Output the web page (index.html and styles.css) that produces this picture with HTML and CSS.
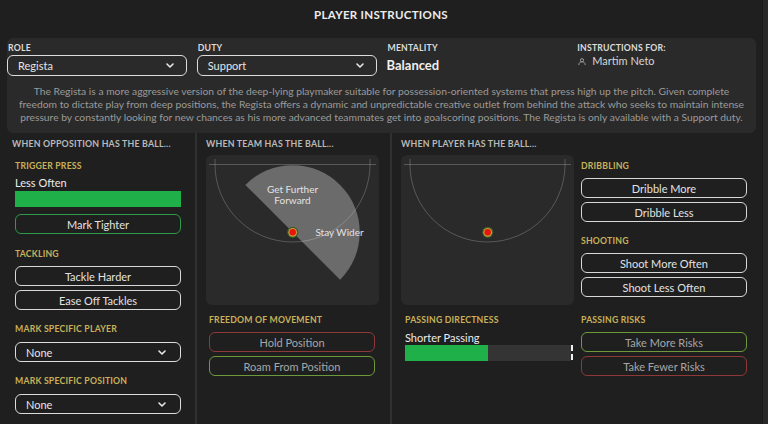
FILE: index.html
```html
<!DOCTYPE html>
<html lang="en">
<head>
    <meta charset="UTF-8">
    <meta name="viewport" content="width=device-width, initial-scale=1.0">
    <title>Player Instructions</title>

    <!-- CSS Styles -->
    <link rel="stylesheet" href="styles.css">
</head>
<body>

    <div class="page">
        <div class="main">
            <!-- Title -->
            <h1 class="title">PLAYER INSTRUCTIONS</h1>

            <!-- Role summary -->
            <section class="role-panel">
                <div class="role-fields">
                    <div class="field">
                        <div class="field-label">ROLE</div>
                        <div class="select">
                            <span>Regista</span>
                            <svg class="chevron" width="8" height="5" viewBox="0 0 8 5"><path d="M1 1 L4 4 L7 1" fill="none" stroke="#e6e6e6" stroke-width="1.6" stroke-linecap="round" stroke-linejoin="round"/></svg>
                        </div>
                    </div>
                    <div class="field">
                        <div class="field-label">DUTY</div>
                        <div class="select">
                            <span>Support</span>
                            <svg class="chevron" width="8" height="5" viewBox="0 0 8 5"><path d="M1 1 L4 4 L7 1" fill="none" stroke="#e6e6e6" stroke-width="1.6" stroke-linecap="round" stroke-linejoin="round"/></svg>
                        </div>
                    </div>
                    <div class="field">
                        <div class="field-label">MENTALITY</div>
                        <div class="mentality-value">Balanced</div>
                    </div>
                    <div class="field">
                        <div class="field-label">INSTRUCTIONS FOR:</div>
                        <div class="player-name">
                            <svg width="8" height="7" viewBox="0 0 8 7"><circle cx="4" cy="2.2" r="1.6" fill="none" stroke="#9a9a9a" stroke-width="1"/><path d="M0.8 7 C0.8 4.6 2.2 3.8 4 3.8 C5.8 3.8 7.2 4.6 7.2 7" fill="none" stroke="#9a9a9a" stroke-width="1"/></svg>
                            <span>Martim Neto</span>
                        </div>
                    </div>
                </div>
                <p class="description">
                    The Regista is a more aggressive version of the deep-lying playmaker suitable for possession-oriented systems that press high up the pitch. Given complete<br>
                    freedom to dictate play from deep positions, the Regista offers a dynamic and unpredictable creative outlet from behind the attack who seeks to maintain intense<br>
                    pressure by constantly looking for new chances as his more advanced teammates get into goalscoring positions. The Regista is only available with a Support duty.
                </p>
            </section>

            <div class="columns">
                <!-- Out of possession -->
                <div class="col col-opposition">
                    <h2 class="col-title">WHEN OPPOSITION HAS THE BALL...</h2>

                    <div class="group group-first">
                        <h3 class="group-title">TRIGGER PRESS</h3>
                        <div class="value-label">Less Often</div>
                        <div class="slider"><div class="slider-fill" style="width: 100%"></div></div>
                        <div class="option-list option-list-tight">
                            <button class="option option-on">Mark Tighter</button>
                        </div>
                    </div>

                    <div class="group">
                        <h3 class="group-title">TACKLING</h3>
                        <div class="option-list">
                            <button class="option">Tackle Harder</button>
                            <button class="option">Ease Off Tackles</button>
                        </div>
                    </div>

                    <div class="group group-select">
                        <h3 class="group-title">MARK SPECIFIC PLAYER</h3>
                        <div class="select select-small">
                            <span>None</span>
                            <svg class="chevron" width="8" height="5" viewBox="0 0 8 5"><path d="M1 1 L4 4 L7 1" fill="none" stroke="#e6e6e6" stroke-width="1.6" stroke-linecap="round" stroke-linejoin="round"/></svg>
                        </div>
                    </div>

                    <div class="group group-select">
                        <h3 class="group-title">MARK SPECIFIC POSITION</h3>
                        <div class="select select-small">
                            <span>None</span>
                            <svg class="chevron" width="8" height="5" viewBox="0 0 8 5"><path d="M1 1 L4 4 L7 1" fill="none" stroke="#e6e6e6" stroke-width="1.6" stroke-linecap="round" stroke-linejoin="round"/></svg>
                        </div>
                    </div>
                </div>

                <!-- Team in possession -->
                <div class="col col-team">
                    <h2 class="col-title">WHEN TEAM HAS THE BALL...</h2>
                    <div class="pitch">
                        <svg width="173" height="150" viewBox="0 0 173 150">
                            <path d="M39.3 29.9 A67 67 0 0 1 134.1 124.7 Z" fill="#6b6b6b"/>
                            <line x1="3" y1="9.5" x2="170" y2="9.5" stroke="rgba(255,255,255,0.22)" stroke-width="1"/>
                            <path d="M9 4 V9.5 A77.5 77.5 0 0 0 164 9.5 V4" fill="none" stroke="rgba(255,255,255,0.22)" stroke-width="1"/>
                            <circle cx="86.7" cy="77.3" r="5.6" fill="#3a5c2b"/>
                            <circle cx="86.7" cy="77.3" r="4.4" fill="#c99a38"/>
                            <circle cx="86.7" cy="77.3" r="3.2" fill="#e8150f"/>
                            <text class="pitch-text" x="86.5" y="37.5">Get Further</text>
                            <text class="pitch-text" x="86.5" y="49">Forward</text>
                            <text class="pitch-text" x="133.5" y="80.5">Stay Wider</text>
                        </svg>
                    </div>

                    <div class="group group-bottom">
                        <h3 class="group-title">FREEDOM OF MOVEMENT</h3>
                        <div class="option-list">
                            <button class="option option-red">Hold Position</button>
                            <button class="option option-olive">Roam From Position</button>
                        </div>
                    </div>
                </div>

                <!-- Player in possession -->
                <div class="col col-player">
                    <h2 class="col-title">WHEN PLAYER HAS THE BALL...</h2>
                    <div class="pitch pitch-player">
                        <svg width="173" height="150" viewBox="0 0 173 150">
                            <line x1="3" y1="9.5" x2="170" y2="9.5" stroke="rgba(255,255,255,0.22)" stroke-width="1"/>
                            <path d="M9 4 V9.5 A77.5 77.5 0 0 0 164 9.5 V4" fill="none" stroke="rgba(255,255,255,0.22)" stroke-width="1"/>
                            <circle cx="86.7" cy="77.3" r="5.6" fill="#3a5c2b"/>
                            <circle cx="86.7" cy="77.3" r="4.4" fill="#c99a38"/>
                            <circle cx="86.7" cy="77.3" r="3.2" fill="#e8150f"/>
                        </svg>
                    </div>

                    <div class="player-side">
                        <div class="group">
                            <h3 class="group-title">DRIBBLING</h3>
                            <div class="option-list">
                                <button class="option">Dribble More</button>
                                <button class="option">Dribble Less</button>
                            </div>
                        </div>
                        <div class="group group-next">
                            <h3 class="group-title">SHOOTING</h3>
                            <div class="option-list">
                                <button class="option">Shoot More Often</button>
                                <button class="option">Shoot Less Often</button>
                            </div>
                        </div>
                    </div>

                    <div class="group group-bottom group-directness">
                        <h3 class="group-title">PASSING DIRECTNESS</h3>
                        <div class="value-label value-label-near">Shorter Passing</div>
                        <div class="slider slider-split">
                            <div class="slider-fill" style="width: 50%"></div>
                            <span class="slider-mark"></span>
                        </div>
                    </div>

                    <div class="group group-bottom group-risks">
                        <h3 class="group-title">PASSING RISKS</h3>
                        <div class="option-list">
                            <button class="option option-olive">Take More Risks</button>
                            <button class="option option-red">Take Fewer Risks</button>
                        </div>
                    </div>
                </div>
            </div>
        </div>

        <!-- Scroll track -->
        <div class="scrollbar"></div>
    </div>

</body>
</html>
```

FILE: styles.css
```css
/* Reset styles */
* {
    margin: 0;
    padding: 0;
    box-sizing: border-box;
}

body {
    font-family: 'Lato', 'Noto Sans', sans-serif;
    background: #1f1f1f;
    color: #e4e4e4;
    width: 768px;
    height: 424px;
    overflow: hidden;
}

.page {
    display: flex;
    width: 768px;
    height: 424px;
}

.main {
    flex: 1;
}

.scrollbar {
    width: 6px;
    background: #282828;
    border-left: 1px solid #1a1a1a;
}

/* Title */
.title {
    height: 30px;
    line-height: 30px;
    text-align: center;
    font-size: 11.5px;
    font-weight: bold;
    letter-spacing: 0.3px;
    color: #ececec;
}

/* Role panel */
.role-panel {
    margin: 8px 0 0 7px;
    width: 749px;
    background: #2a2a2a;
    border-radius: 6px;
    padding: 4px 0 9px;
}

.role-fields {
    display: flex;
    gap: 10px;
}

.field {
    width: 180px;
}

.field-label {
    font-size: 8.7px;
    font-weight: bold;
    line-height: 12px;
    padding-left: 1px;
    letter-spacing: 0.2px;
    color: #dcdcdc;
}

.select {
    margin-top: 1px;
    height: 21px;
    border: 1.5px solid #dcdcdc;
    border-radius: 6px;
    display: flex;
    align-items: center;
    justify-content: space-between;
    padding: 0 12px 0 10px;
    font-size: 11px;
    color: #e6e6e6;
}

.select-small {
    height: 20px;
    margin-top: 7px;
    padding-right: 14px;
}

.mentality-value {
    margin-top: 1px;
    font-size: 13px;
    font-weight: bold;
    line-height: 21px;
    color: #f0f0f0;
}

.player-name {
    display: flex;
    align-items: center;
    gap: 6px;
    padding-left: 2px;
    font-size: 11px;
    line-height: 14px;
    color: #d6d6d6;
}

.description {
    margin-top: 9px;
    text-align: center;
    white-space: nowrap;
    font-size: 10.3px;
    line-height: 13px;
    color: #9a9a9a;
}

/* Instruction columns */
.columns {
    display: flex;
    margin-top: 0;
    height: 291px;
}

.col {
    padding-top: 5px;
    border-right: 2px solid #303030;
}

.col-opposition {
    width: 197px;
    padding-left: 12px;
}

.col-team {
    width: 195px;
    padding-left: 9px;
}

.col-player {
    flex: 1;
    border-right: none;
    padding-left: 9px;
    display: grid;
    grid-template-columns: 173px 167px;
    grid-template-rows: 12px 155px auto;
    column-gap: 7px;
    align-content: start;
}

.col-title {
    font-size: 8.8px;
    font-weight: bold;
    line-height: 12px;
    letter-spacing: 0.2px;
    color: #b9b9b9;
}

.group {
    padding-left: 3px;
    width: 169px;
    margin-top: 14px;
}

.group-first {
    margin-top: 10px;
}

.group-select {
    margin-top: 13px;
}

.group-title {
    font-size: 8.7px;
    font-weight: bold;
    line-height: 12px;
    letter-spacing: 0.2px;
    color: #c8b15a;
}

.value-label {
    margin-top: 5px;
    font-size: 11px;
    line-height: 12px;
    color: #ececec;
}

.value-label-near {
    margin-top: 6px;
}

.slider {
    position: relative;
    height: 16px;
    margin-top: 2px;
    background: #343434;
}

.slider-split {
    margin-top: 1px;
    width: 166px;
}

.slider-fill {
    height: 100%;
    background: #1fb04a;
}

/* end marker drawn over the track */
.slider-mark {
    position: absolute;
    right: -2px;
    top: 0;
    width: 2px;
    height: 16px;
    background: linear-gradient(#f0f0f0 0 6px, transparent 6px 9px, #f0f0f0 9px 15px, transparent 15px);
}

.option-list {
    display: flex;
    flex-direction: column;
    gap: 4px;
    margin-top: 6px;
}

.option-list-tight {
    margin-top: 7px;
}

.option {
    height: 20px;
    width: 166px;
    border: 1.5px solid #d8d8d8;
    border-radius: 6px;
    background: transparent;
    font-family: inherit;
    font-size: 11px;
    color: #e2e2e2;
}

.option-on {
    border-color: #2c9c4a;
}

.option-red {
    border-color: #8e3838;
    color: #a6a6a6;
}

.option-olive {
    border-color: #6c9a3a;
    color: #a6a6a6;
}

/* Pitch diagrams */
.pitch {
    width: 173px;
    height: 150px;
    margin-top: 5px;
    background: #2a2a2a;
    border-radius: 6px;
    overflow: hidden;
}

.pitch svg {
    display: block;
}

.pitch-text {
    font-family: 'Lato', 'Noto Sans', sans-serif;
    font-size: 10px;
    fill: #e2e2e2;
    text-anchor: middle;
}

.group-bottom {
    margin-top: 9px;
}

.col-player .col-title {
    grid-column: 1;
    grid-row: 1;
}

.pitch-player {
    grid-column: 1;
    grid-row: 2;
}

.player-side {
    grid-column: 2;
    grid-row: 1 / span 2;
    padding-top: 8px;
}

.player-side .group {
    padding-left: 0;
    width: 167px;
}

.player-side .group-next {
    margin-top: 13px;
}

.group-directness {
    grid-column: 1;
    grid-row: 3;
    padding-left: 4px;
}

.group-risks {
    grid-column: 2;
    grid-row: 3;
    padding-left: 0;
}
```
